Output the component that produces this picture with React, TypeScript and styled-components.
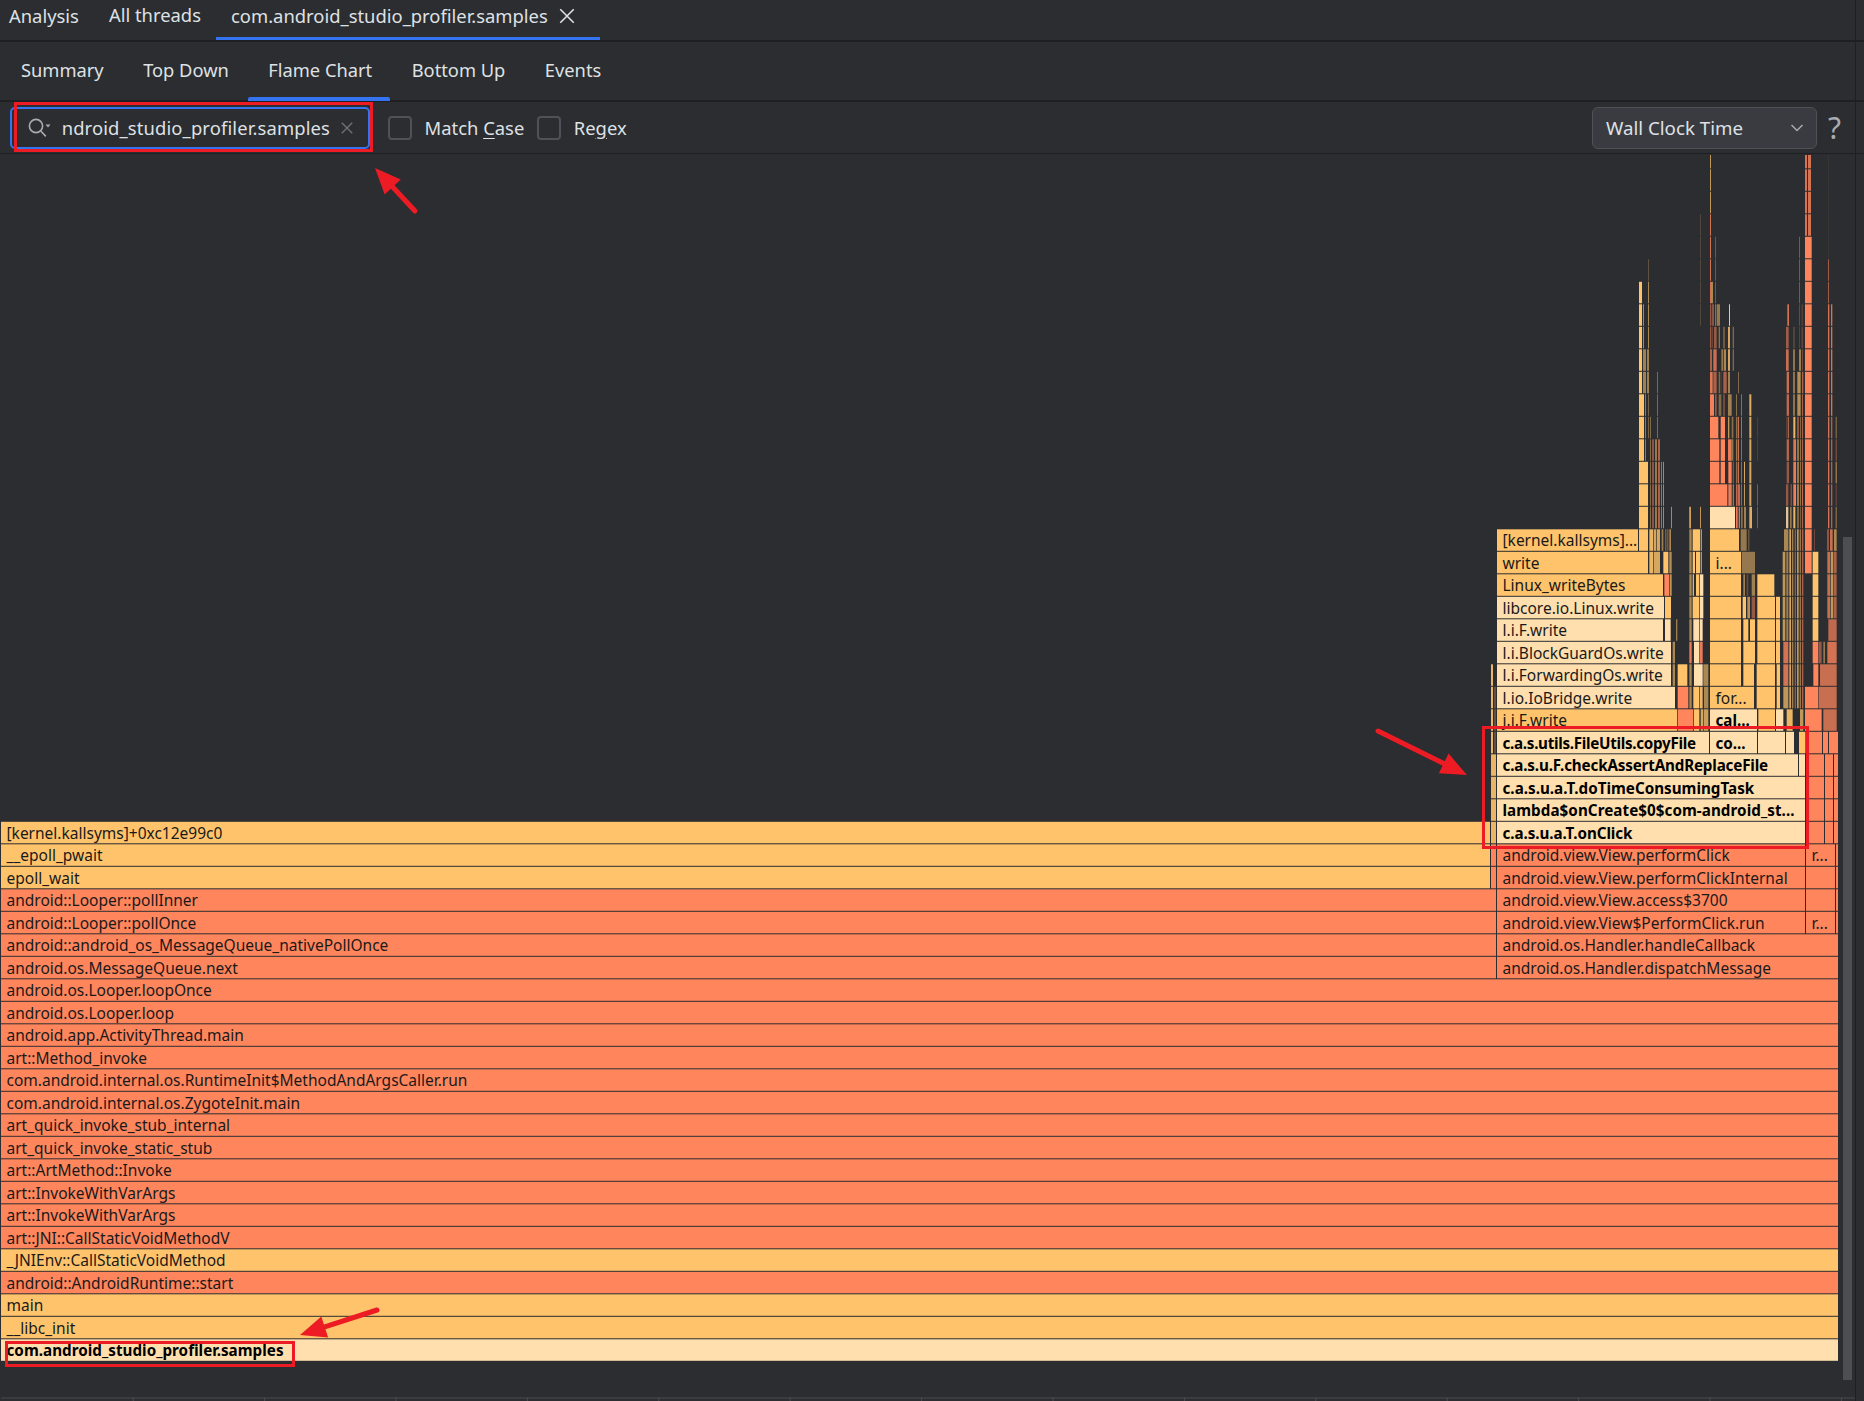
import React from "react";
import styled, { createGlobalStyle } from "styled-components";

const Global = createGlobalStyle`
  html, body { margin: 0; padding: 0; background: #2b2d30; }
  #root { width: 1864px; height: 1401px; }
`;

const UI = `"Noto Sans", "Open Sans", sans-serif`;

const Page = styled.div`
  position: relative;
  width: 1864px;
  height: 1401px;
  overflow: hidden;
  background: #2b2d30;
  color: #dfe1e5;
  font-family: ${UI};
  display: flex;
  flex-direction: column;
`;
const TabBar = styled.div`
  height: 40px;
  flex: none;
  display: flex;
  align-items: flex-start;
  gap: 30px;
  padding-left: 9px;
  border-bottom: 2px solid #1e1f22;
  box-sizing: content-box;
`;
const TopTab = styled.div<{ $active?: boolean; $raised?: boolean }>`
  position: relative;
  height: 37px;
  display: flex;
  align-items: center;
  gap: 10px;
  font-size: 18.4px;
  line-height: 24px;
  padding-bottom: ${(p) => (p.$raised ? 8 : 5)}px;
  box-sizing: border-box;
  ${(p) =>
    p.$active &&
    `&::after { content: ""; position: absolute; left: -15px; right: -24px; top: 37px; height: 3px; background: #3574f0; }`}
`;
const SubBar = styled.div`
  height: 60px;
  flex: none;
  display: flex;
  align-items: center;
  gap: 39.5px;
  padding: 0 0 2px 21px;
  border-bottom: 2px solid #1e1f22;
  box-sizing: border-box;
`;
const SubTab = styled.div<{ $active?: boolean }>`
  position: relative;
  font-size: 18.3px;
  line-height: 24px;
  ${(p) =>
    p.$active &&
    `&::after { content: ""; position: absolute; left: -20px; right: -18px; top: 39px; height: 4px; border-radius: 2px 2px 0 0; background: #3574f0; }`}
`;
const FilterBar = styled.div`
  height: 52px;
  flex: none;
  display: flex;
  align-items: center;
  padding-left: 10px;
  border-bottom: 1px solid #1e1f22;
  box-sizing: border-box;
`;
const SearchBox = styled.div`
  width: 360px;
  height: 42px;
  flex: none;
  display: flex;
  align-items: center;
  padding: 0 14px 0 15px;
  box-sizing: border-box;
  border: 2px solid #3574f0;
  border-radius: 5px;
  margin-right: 18px;
`;
const SearchText = styled.div`
  width: 270px;
  margin-left: 9px;
  display: flex;
  justify-content: flex-end;
  white-space: nowrap;
  font-size: 18.4px;
  letter-spacing: 0.13px;
  line-height: 24px;
`;
const CheckBox = styled.div`
  width: 24px;
  height: 24px;
  flex: none;
  box-sizing: border-box;
  border: 2px solid #4e5157;
  border-radius: 4px;
  background: #2b2d30;
`;
const CheckLabel = styled.div`
  margin: 0 13px 0 12.5px;
  font-size: 18.4px;
  line-height: 24px;
  white-space: nowrap;
  u { text-underline-offset: 3px; }
`;
const Spacer = styled.div`
  flex: 1;
`;
const Dropdown = styled.div`
  width: 225px;
  height: 42px;
  flex: none;
  display: flex;
  align-items: center;
  justify-content: space-between;
  padding: 0 12px 0 13px;
  box-sizing: border-box;
  background: #393b40;
  border: 1px solid #4e5157;
  border-radius: 6px;
  font-size: 18.7px;
  line-height: 24px;
`;
const Help = styled.div`
  width: 47px;
  padding-left: 11px;
  box-sizing: border-box;
  font-size: 30px;
  line-height: 34px;
  color: #a8abb0;
`;
const Chart = styled.div`
  flex: 1;
  min-height: 0;
  position: relative;
`;
const ChartSvg = styled.svg`
  display: block;
  width: 1856px;
  height: 1247px;
  text {
    font-family: ${UI};
    font-size: 15.5px;
    fill: #1a1a1a;
  }
  text.hit { font-size: 15.2px; font-weight: 700; fill: #000; }
`;
const PanelEdge = styled.div`
  position: absolute;
  left: 1855px;
  top: 0;
  bottom: 0;
  width: 1px;
  background: #1e1f22;
`;
const ScrollThumb = styled.div`
  position: absolute;
  left: 1843px;
  top: 537px;
  width: 9px;
  height: 843px;
  background: #4d4e51;
`;
const RedBox = styled.div<{ $l: number; $t: number; $w: number; $h: number }>`
  position: absolute;
  left: ${(p) => p.$l}px;
  top: ${(p) => p.$t}px;
  width: ${(p) => p.$w}px;
  height: ${(p) => p.$h}px;
  box-sizing: border-box;
  border: 3px solid #ed1c24;
`;
const ArrowLayer = styled.svg`
  position: absolute;
  left: 0;
  top: 0;
  width: 1864px;
  height: 1401px;
  pointer-events: none;
`;

const COL: Record<string, string> = { y: "#ffc46b", o: "#ff855c", l: "#ffdfae" };
const CHART_TOP = 154;
const P = 22.5;
const rowY = (k: number) => 1339.3 - k * P - CHART_TOP;

type Cell = { k: number; a: number; b: number; c: string; t?: string; hit?: boolean; op?: number; tw?: number };
const cells: Cell[] = [];
const C = (k: number, a: number, b: number, c: string, t?: string, hit?: boolean, tw?: number) =>
  cells.push({ k, a, b, c, t, hit, tw });
const S = (a: number, b: number, top: number, bot: number, c: string, op = 1) => {
  for (let k = top; k >= bot; k--) cells.push({ k, a, b, c, op });
};
type Seg = [number, number, string, number?];
// segments read off the picture: 1/3 px steps from a base x
const Z = (base: number, k: number, segs: Seg[]) =>
  segs.forEach(([a, b, c, op]) =>
    cells.push({ k, a: base + a / 3, b: base + b / 3, c, op: op ?? 1 })
  );

// top of the chart
S(1710, 1711, 53, 51, "y", 0.7);
S(1710, 1711, 50, 47, "o", 0.8);
S(1711, 1713, 47, 47, "y", 0.6);
S(1715, 1716, 49, 47, "y", 0.3);
S(1700, 1701, 50, 46, "y", 0.18);
S(1648, 1649, 48, 48, "y", 0.25);
S(1648, 1649, 47, 45, "y", 0.6);
S(1805, 1807, 53, 50, "o", 0.8);
S(1808, 1811, 53, 50, "o", 0.8);
S(1805, 1811.7, 49, 35, "o");
S(1799, 1800, 49, 47, "o", 0.45);
S(1828, 1829, 48, 47, "o", 0.55);
S(1828, 1829, 53, 49, "y", 0.06);

// left spike cluster
S(1639, 1642, 47, 45, "y");
S(1643, 1644, 46, 46, "y", 0.6);
S(1643, 1644, 45, 45, "y", 0.6);
S(1639, 1642, 44, 43, "y");
S(1643, 1646, 44, 43, "y", 0.55);
S(1647, 1649, 44, 43, "y", 0.55);
S(1639, 1644, 42, 40, "y");
S(1645, 1646, 42, 40, "y", 0.5);
S(1648, 1649, 42, 41, "y", 0.35);
S(1639, 1648, 39, 36, "y");
S(1657, 1658, 43, 41, "y", 0.4);
S(1650, 1651, 41, 37, "y", 0.4);
S(1652, 1654, 40, 37, "o", 0.45);
S(1655, 1657, 40, 37, "y", 0.5);
S(1658, 1660, 40, 37, "o", 0.6);
S(1661, 1662, 39, 37, "y", 0.5);
S(1663, 1664, 39, 37, "y", 0.6);
S(1671, 1672, 37, 37, "y", 0.6);
S(1689, 1691, 37, 37, "y", 0.6);
S(1700, 1701, 37, 37, "y", 0.7);
S(1690, 1691, 37, 37, "y", 0.4);

const bSegs: Record<number, Seg[]> = {
  46: [[60,64,"o",.5],[66,72,"o",.45],[75,78,"y",.45],[80,90,"y",.5],[117,120,"y"],[292,297,"o",.8],[327,330,"o",.3],[335,338,"o",.3],[414,418,"o",.8],[423,427,"o",.8]],
  45: [[60,64,"o",.5],[66,68,"o",.4],[72,80,"o",.5],[86,90,"y",.45],[100,104,"y",.45],[114,120,"y",.8],[128,132,"y",.4],[288,296,"o",.55],[310,314,"y",.25],[327,329,"o",.35],[335,338,"o",.4],[414,418,"o",.8],[423,427,"o",.8]],
  44: [[60,66,"o",.6],[70,80,"o",.75],[94,100,"y",.5],[102,108,"y",.6],[114,120,"y",.8],[128,132,"y",.4],[288,296,"o",.75],[310,314,"y",.7],[327,333,"y",.55],[336,338,"o",.5],[414,418,"o",.8],[423,427,"o",.8]],
  43: [[60,68,"o",.85],[70,80,"o",.6],[86,90,"y",.4],[92,94,"o",.4],[100,110,"o",.6],[114,120,"y",.55],[144,147,"y",.4],[290,297,"o",.75],[310,314,"y",.7],[322,332,"y",.65],[336,340,"o",.6],[414,418,"o",.8],[423,427,"o",.8]],
  42: [[60,72,"o",.95],[75,80,"o",.5],[86,94,"y",.4],[100,104,"o",.5],[114,125,"y",.55],[138,141,"y",.45],[153,156,"y",.45],[178,184,"y",.85],[290,297,"o",.7],[310,314,"y",.7],[322,332,"y",.65],[336,339,"o",.6],[414,418,"o",.8],[423,427,"o",.8]],
  41: [[60,85,"o"],[92,105,"o"],[114,118,"y",.7],[125,130,"y",.45],[138,141,"y",.45],[143,147,"o",.75],[153,156,"y",.5],[178,184,"y",.85],[201,203,"y",.2],[290,292,"o",.6],[294,297,"o",.6],[310,316,"y",.9],[322,326,"o",.7],[330,332,"y",.6],[336,339,"o",.6],[414,418,"o",.8],[423,427,"o",.6],[437,440,"y",.5]],
  40: [[60,88,"o"],[92,105,"o"],[114,125,"o",.9],[126,130,"y",.5],[138,141,"y",.5],[143,147,"o",.75],[153,156,"y",.45],[178,184,"y",.8],[201,203,"y",.2],[290,297,"o",.65],[310,318,"o",.85],[322,326,"y",.7],[330,332,"y",.7],[336,339,"o",.6],[414,418,"o",.8],[423,427,"o",.6],[437,440,"o",.5]],
  39: [[60,88,"o"],[92,105,"o"],[115,125,"o"],[128,132,"o",.4],[138,141,"y",.45],[143,147,"o",.75],[153,156,"y",.45],[162,165,"y",.8],[178,184,"y",.8],[290,297,"o",.5],[310,318,"o",.9],[322,326,"y",.75],[330,332,"y",.7],[336,339,"o",.6],[414,418,"o",.8],[423,427,"o",.6],[437,440,"y",.7]],
  38: [[60,112,"o"],[115,125,"o",.9],[128,132,"y",.5],[138,142,"o",.7],[143,150,"o",.7],[153,156,"y",.45],[162,165,"y",.7],[178,184,"y",.8],[201,204,"y",.35],[288,295,"o",.5],[302,305,"o",.6],[310,318,"o",.95],[322,326,"y",.8],[330,332,"y",.7],[336,339,"o",.7],[414,418,"o",.8],[423,427,"o",.6],[437,440,"o",.35]],
  37: [[60,135,"l"],[138,143,"o",.9],[146,150,"o",.8],[153,158,"y",.45],[162,168,"y",.55],[178,186,"y",.85],[201,204,"y",.35],[288,295,"l",.85],[300,305,"y",.5],[310,316,"y",.9],[322,326,"y",.55],[330,332,"y",.5],[336,339,"o",.6],[414,418,"o",.8],[423,427,"o",.6],[437,440,"y",.55]],
};
Object.entries(bSegs).forEach(([k, s]) => Z(1690, Number(k), s));

const aSegs: Record<number, Seg[]> = {
  36: [[28,40,"y",.9],[42,48,"y",.8],[50,60,"y",.8],[65,70,"y",.55],[76,79,"y",.5],[82,85,"o",.6],[88,93,"y",.6],[148,155,"y",.6],[158,180,"y"],[182,186,"y",.7],[210,297,"y"],[302,320,"y",.5],[325,328,"y",.4],[432,445,"y",.6],[522,525,"o",.3],[562,566,"o",.7],[570,578,"o",.75],[582,590,"y",.6]],
  35: [[28,40,"y",.9],[42,60,"y",.8],[70,85,"y"],[88,95,"y",.65],[148,155,"y",.6],[158,165,"y"],[168,180,"y"],[182,186,"y",.7],[305,345,"y",.5],[518,535,"y"],[562,570,"o",.75],[572,580,"y",.7],[582,590,"o",.6]],
  34: [[73,88,"o"],[90,95,"y",.7],[148,155,"y",.6],[158,162,"y",.9],[168,178,"y"],[180,190,"l"],[310,315,"y",.55],[320,325,"o",.3],[335,345,"y",.55],[352,403,"y"],[518,535,"y"],[562,570,"o",.75],[572,580,"y",.7],[582,590,"o",.6]],
  33: [[75,93,"y"],[148,155,"y",.6],[158,178,"y"],[180,190,"l"],[308,318,"y"],[322,330,"y",.65],[335,345,"o",.5],[352,405,"y"],[408,420,"y"],[518,535,"y"],[562,570,"o",.75],[572,580,"y",.7],[582,590,"o",.6]],
  32: [[75,92,"l"],[108,112,"y",.55],[148,155,"y",.6],[160,178,"l"],[180,188,"l"],[310,325,"y"],[330,345,"y"],[352,405,"y"],[408,420,"y"],[518,535,"y"],[565,590,"o",.7]],
  31: [[98,105,"y",.6],[148,155,"o",.9],[162,178,"l"],[180,188,"o",.9],[310,345,"y"],[352,405,"y"],[408,420,"y"],[430,445,"o",.8],[518,535,"o"],[537,545,"o",.5],[550,555,"y",.5],[562,590,"o",.8]],
  30: [[98,105,"y",.6],[113,142,"y"],[148,155,"y",.6],[162,188,"l"],[190,205,"y",.6],[310,342,"y"],[350,405,"y"],[410,420,"y"],[430,445,"o",.8],[520,535,"o"],[540,590,"o",.75]],
  29: [[113,145,"o"],[148,155,"y",.6],[160,178,"y"],[180,188,"y",.9],[192,205,"y",.6],[350,405,"y"],[410,420,"y"],[430,445,"y",.7],[495,535,"o"],[537,590,"o",.75]],
  28: [[113,160,"o"],[162,178,"y"],[182,190,"y",.8],[192,205,"y",.75],[355,405,"y"],[408,430,"l"],[440,458,"y",.9],[480,490,"y",.7],[495,545,"o"],[550,590,"o",.75]],
};
Object.entries(aSegs).forEach(([k, s]) => Z(1640, Number(k), s));

// thin stripes between the yellow blocks and the orange column
const stripes: Seg[] = [[448,453,"y",.8],[456,460,"y",.55],[464,468,"o",.5],[471,476,"y",.7],[479,483,"y",.5],[486,490,"o",.6]];
[36, 35, 34, 33, 32, 31, 30, 29].forEach((k) => Z(1640, k, stripes));
[35, 34, 33, 32].forEach((k) => Z(1640, k, [[428,436,"y",.7],[439,445,"y",.55]]));

S(1491, 1493, 30, 27, "y", 0.9);
S(1494, 1496, 29, 27, "y", 0.25);
S(1491, 1496, 26, 23, "y", 0.9);
S(1491, 1496, 22, 21, "o");

// labelled stack on the right
C(36, 1497, 1638, COL.y, "[kernel.kallsyms]...");
C(35, 1497, 1648, COL.y, "write");
C(34, 1497, 1663, COL.y, "Linux_writeBytes");
C(33, 1497, 1664, COL.l, "libcore.io.Linux.write");
C(32, 1497, 1663, COL.l, "l.i.F.write");
C(31, 1497, 1671, COL.l, "l.i.BlockGuardOs.write");
C(30, 1497, 1671, COL.l, "l.i.ForwardingOs.write");
C(29, 1497, 1675, COL.l, "l.io.IoBridge.write");
C(28, 1497, 1677, COL.y, "j.i.F.write");
C(27, 1497, 1709, COL.l, "c.a.s.utils.FileUtils.copyFile", true, 193.5);
C(26, 1497, 1798, COL.l, "c.a.s.u.F.checkAssertAndReplaceFile", true, 265.7);
C(25, 1497, 1805, COL.l, "c.a.s.u.a.T.doTimeConsumingTask", true, 251.7);
C(24, 1497, 1805, COL.l, "lambda$onCreate$0$com-android_st...", true, 292);
C(23, 1497, 1805, COL.l, "c.a.s.u.a.T.onClick", true, 130);
C(35, 1710, 1741, COL.y, "i...");
C(34, 1710, 1741, COL.y);
C(33, 1710, 1741, COL.y);
C(32, 1710, 1741, COL.y);
C(31, 1710, 1741, COL.y);
C(30, 1710, 1741, COL.y);
C(29, 1710, 1754, COL.y, "for...");
C(28, 1710, 1757, COL.l, "cal...", true);
C(27, 1710, 1757, COL.l, "co...", true);
C(27, 1758, 1785, COL.l);
C(27, 1786, 1794, COL.l);
C(27, 1799, 1805, COL.y);
C(26, 1799, 1805, COL.l);
C(27, 1805.5, 1822, COL.o);
C(27, 1823, 1828, COL.o);
C(27, 1829, 1838, COL.o);
[26, 25, 24, 23].forEach((k) => {
  C(k, 1806, 1824, COL.o);
  C(k, 1825, 1833, COL.o);
  C(k, 1834, 1838, COL.o);
});

C(22, 1497, 1805, COL.o, "android.view.View.performClick");
C(22, 1806, 1835, COL.o, "r...");
C(22, 1836, 1838, COL.o);
C(21, 1497, 1805, COL.o, "android.view.View.performClickInternal");
C(21, 1806, 1835, COL.o);
C(21, 1836, 1838, COL.o);
C(20, 1497, 1805, COL.o, "android.view.View.access$3700");
C(20, 1806, 1835, COL.o);
C(20, 1836, 1838, COL.o);
C(19, 1497, 1805, COL.o, "android.view.View$PerformClick.run");
C(19, 1806, 1835, COL.o, "r...");
C(19, 1836, 1838, COL.o);
C(18, 1497, 1838, COL.o, "android.os.Handler.handleCallback");
C(17, 1497, 1838, COL.o, "android.os.Handler.dispatchMessage");

// wide rows at the bottom
const wide: [string, string, number][] = [
  ["[kernel.kallsyms]+0xc12e99c0", COL.y, 1490],
  ["__epoll_pwait", COL.y, 1490],
  ["epoll_wait", COL.y, 1490],
  ["android::Looper::pollInner", COL.o, 1496],
  ["android::Looper::pollOnce", COL.o, 1496],
  ["android::android_os_MessageQueue_nativePollOnce", COL.o, 1496],
  ["android.os.MessageQueue.next", COL.o, 1496],
  ["android.os.Looper.loopOnce", COL.o, 1838],
  ["android.os.Looper.loop", COL.o, 1838],
  ["android.app.ActivityThread.main", COL.o, 1838],
  ["art::Method_invoke", COL.o, 1838],
  ["com.android.internal.os.RuntimeInit$MethodAndArgsCaller.run", COL.o, 1838],
  ["com.android.internal.os.ZygoteInit.main", COL.o, 1838],
  ["art_quick_invoke_stub_internal", COL.o, 1838],
  ["art_quick_invoke_static_stub", COL.o, 1838],
  ["art::ArtMethod::Invoke", COL.o, 1838],
  ["art::InvokeWithVarArgs", COL.o, 1838],
  ["art::InvokeWithVarArgs", COL.o, 1838],
  ["art::JNI::CallStaticVoidMethodV", COL.o, 1838],
  ["_JNIEnv::CallStaticVoidMethod", COL.y, 1838],
  ["android::AndroidRuntime::start", COL.o, 1838],
  ["main", COL.y, 1838],
  ["__libc_init", COL.y, 1838],
];
wide.forEach(([t, c, b], i) => C(23 - i, 1, b, c, t));
C(0, 1, 1838, COL.l, "com.android_studio_profiler.samples", true, 277);

const ticks = Array.from({ length: 14 }, (_, i) => 132.7 + i * 131.4);

const FlameChart = () => (
  <ChartSvg viewBox="0 0 1856 1247">
    {cells.map((n, i) => {
      const y = Math.max(rowY(n.k), 1);
      const h = rowY(n.k) + P - 1 - y;
      const fill = COL[n.c] ?? n.c;
      return (
        <g key={i}>
          <rect x={n.a} y={y} width={n.b - n.a} height={h} fill={fill} opacity={n.op ?? 1} />
          {n.t && (
            <text x={n.a + 5.5} y={y + 17} className={n.hit ? "hit" : undefined} textLength={n.tw}>
              {n.t}
            </text>
          )}
        </g>
      );
    })}
    <rect x={1} y={1243.5} width={1854} height={1} fill="#4a4c50" />
    {ticks.map((x) => (
      <rect key={x} x={x} y={1243.5} width={1} height={3.5} fill="#4a4c50" />
    ))}
  </ChartSvg>
);

const Arrow = ({ x1, y1, x2, y2 }: { x1: number; y1: number; x2: number; y2: number }) => {
  const a = Math.atan2(y2 - y1, x2 - x1);
  const len = 26;
  const wid = 11;
  const bx = x2 - Math.cos(a) * len;
  const by = y2 - Math.sin(a) * len;
  const nx = -Math.sin(a) * wid;
  const ny = Math.cos(a) * wid;
  return (
    <g fill="#ed1c24" stroke="none">
      <line x1={x1} y1={y1} x2={bx} y2={by} stroke="#ed1c24" strokeWidth={5} strokeLinecap="round" />
      <polygon points={`${x2},${y2} ${bx + nx},${by + ny} ${bx - nx},${by - ny}`} />
    </g>
  );
};

const SearchIcon = () => (
  <svg width="24" height="24" viewBox="0 0 24 24" fill="none" stroke="#a8abb0" strokeWidth="1.6">
    <circle cx="9" cy="10" r="6.6" />
    <path d="M13.8 15l5 5.4" />
    <path d="M18.5 8.5h5l-2.5 3z" fill="#a8abb0" stroke="none" />
  </svg>
);
const CloseIcon = ({ size, color, w }: { size: number; color: string; w: number }) => (
  <svg width={size} height={size} viewBox="0 0 16 16" stroke={color} strokeWidth={w} fill="none">
    <path d="M2 2l12 12M14 2L2 14" />
  </svg>
);
const Chevron = () => (
  <svg width="14" height="10" viewBox="0 0 14 10" fill="none" stroke="#a8abb0" strokeWidth="1.5">
    <path d="M1.5 2l5.5 5.5L12.5 2" />
  </svg>
);

export default function App() {
  return (
    <Page>
      <Global />
      <TabBar>
        <TopTab>Analysis</TopTab>
        <TopTab $raised>All threads</TopTab>
        <TopTab $active>
          com.android_studio_profiler.samples
          <CloseIcon size={18} color="#dfe1e5" w={1.4} />
        </TopTab>
      </TabBar>
      <SubBar>
        <SubTab>Summary</SubTab>
        <SubTab>Top Down</SubTab>
        <SubTab $active>Flame Chart</SubTab>
        <SubTab>Bottom Up</SubTab>
        <SubTab>Events</SubTab>
      </SubBar>
      <FilterBar>
        <SearchBox>
          <SearchIcon />
          <SearchText>ndroid_studio_profiler.samples</SearchText>
          <Spacer />
          <CloseIcon size={14} color="#6f737a" w={1.5} />
        </SearchBox>
        <CheckBox />
        <CheckLabel>
          Match <u>C</u>ase
        </CheckLabel>
        <CheckBox />
        <CheckLabel>
          Re<u>g</u>ex
        </CheckLabel>
        <Spacer />
        <Dropdown>
          Wall Clock Time
          <Chevron />
        </Dropdown>
        <Help>?</Help>
      </FilterBar>
      <Chart>
        <FlameChart />
      </Chart>
      <PanelEdge />
      <ScrollThumb />
      <RedBox $l={14} $t={102} $w={359} $h={50} />
      <RedBox $l={1482} $t={726} $w={327} $h={123} />
      <RedBox $l={5} $t={1341} $w={290} $h={26} />
      <ArrowLayer viewBox="0 0 1864 1401">
        <Arrow x1={415} y1={211} x2={375} y2={168} />
        <Arrow x1={1378} y1={731} x2={1467} y2={775} />
        <Arrow x1={377} y1={1310} x2={300} y2={1335} />
      </ArrowLayer>
    </Page>
  );
}
